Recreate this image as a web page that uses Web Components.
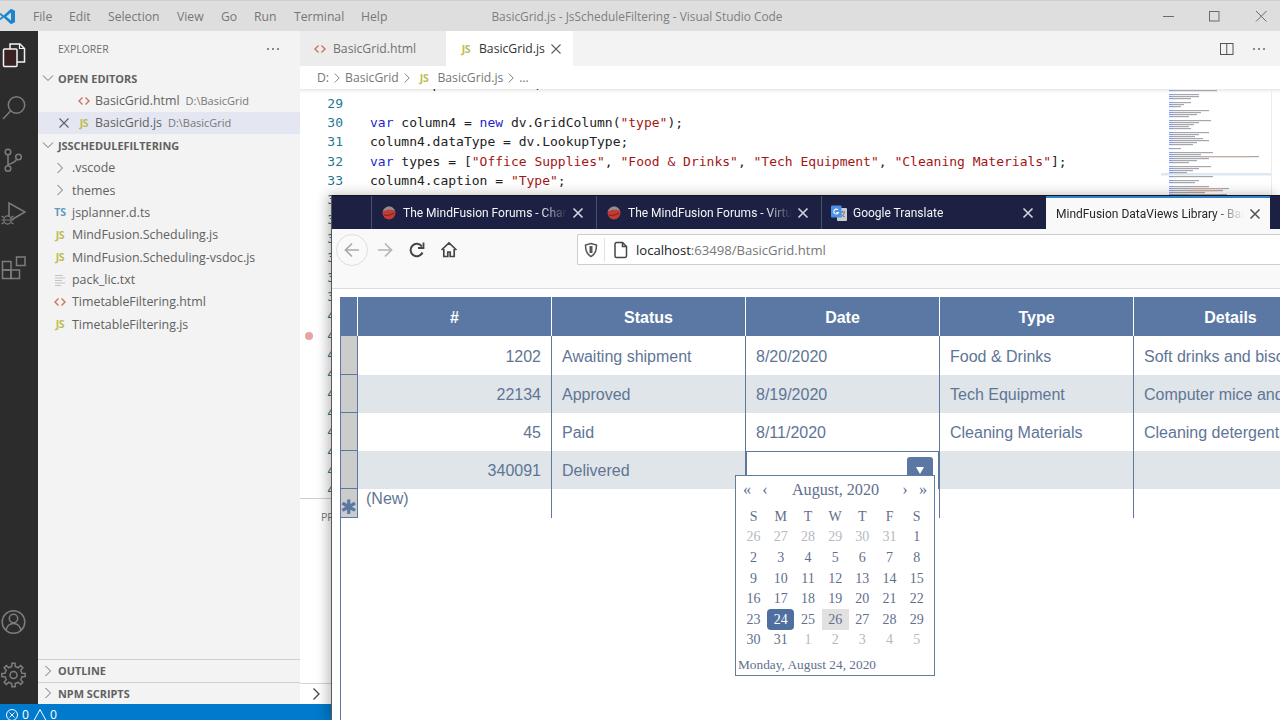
<!DOCTYPE html>
<html>
<head>
<meta charset="utf-8">
<title>BasicGrid.js - JsScheduleFiltering - Visual Studio Code</title>
<style>
  html, body { margin: 0; height: 720px; overflow: hidden; background: #fff; }
  body { position: relative; font-family: 'Open Sans', sans-serif; }
</style>
</head>
<body>
<code-window>
  <title-bar slot="top"></title-bar>
  <activity-bar slot="activity"></activity-bar>
  <explorer-panel slot="side"></explorer-panel>
  <editor-area slot="main"></editor-area>
  <status-bar slot="bottom"></status-bar>
</code-window>
<browser-window>
  <data-grid></data-grid>
</browser-window>

<script>
const uiFont = "'Open Sans', sans-serif";

const icons = {
  html: `<svg width="16" height="16" viewBox="0 0 16 16" fill="none" stroke="#c9745f" stroke-width="1.4"><path d="M6.5 4.5 3 8l3.5 3.5M9.5 4.5 13 8l-3.5 3.5"/></svg>`,
  js: `<span style="font:700 10.5px 'Open Sans',sans-serif;color:#bdbd50;letter-spacing:-.3px">JS</span>`,
  ts: `<span style="font:700 10.5px 'Open Sans',sans-serif;color:#5f9cba;letter-spacing:-.3px">TS</span>`,
  txt: `<svg width="16" height="16" viewBox="0 0 16 16" stroke="#c4c4c4" stroke-width="1"><path d="M3 3.5h8M3 6h10M3 8.5h7M3 11h10M3 13.5h6"/></svg>`,
  chevR: `<svg width="16" height="16" viewBox="0 0 16 16" fill="none" stroke="#6f6f6f" stroke-width="1"><path d="m5.5 3 5 5-5 5"/></svg>`,
  chevD: `<svg width="16" height="16" viewBox="0 0 16 16" fill="none" stroke="#6f6f6f" stroke-width="1"><path d="m3 5.5 5 5 5-5"/></svg>`,
  close: `<svg width="16" height="16" viewBox="0 0 16 16" fill="none" stroke="#5f5f5f" stroke-width="1.1"><path d="m3.5 3.5 9 9m0-9-9 9"/></svg>`,
  more: `<svg width="16" height="16" viewBox="0 0 16 16" fill="#666"><circle cx="3" cy="8" r="1"/><circle cx="8" cy="8" r="1"/><circle cx="13" cy="8" r="1"/></svg>`
};

function gearPath(cx, cy, outer, inner, teeth) {
  let d = '';
  const step = Math.PI * 2 / teeth;
  for (let i = 0; i < teeth; i++) {
    const a = i * step - Math.PI / 2;
    const pts = [[inner, a - step * .5], [inner, a - step * .27], [outer, a - step * .17], [outer, a + step * .17], [inner, a + step * .27]];
    pts.forEach(([r, t], k) => {
      d += (i === 0 && k === 0 ? 'M' : 'L') + (cx + r * Math.cos(t)).toFixed(2) + ' ' + (cy + r * Math.sin(t)).toFixed(2);
    });
  }
  return d + 'Z';
}

class CodeWindow extends HTMLElement {
  constructor() {
    super();
    this.attachShadow({ mode: 'open' });
  }
  connectedCallback() {
    this.shadowRoot.innerHTML = `
      <style>
        :host { display: flex; flex-direction: column; width: 1280px; height: 726px; }
        .body { flex: 1; display: flex; min-height: 0; }
      </style>
      <slot name="top"></slot>
      <div class="body">
        <slot name="activity"></slot>
        <slot name="side"></slot>
        <slot name="main"></slot>
      </div>
      <slot name="bottom"></slot>
    `;
  }
}

class TitleBar extends HTMLElement {
  constructor() {
    super();
    this.attachShadow({ mode: 'open' });
  }
  connectedCallback() {
    const menus = [['File', 36], ['Edit', 39], ['Selection', 69], ['View', 44], ['Go', 33], ['Run', 40], ['Terminal', 67], ['Help', 122]];
    this.shadowRoot.innerHTML = `
      <style>
        :host { display: flex; align-items: center; height: 31px; box-sizing: border-box; background: #dedede; border-top: 1px solid #cfcfcf; font: 12.2px ${uiFont}; color: #777; }
        .logo { width: 33px; height: 30px; display: flex; align-items: center; flex: none; }
        nav { display: flex; flex: none; }
        nav span { flex: none; }
        .title { width: 308px; flex: none; text-align: center; color: #7f7f7f; font-size: 11.9px; white-space: nowrap; }
        .ctl { margin-left: auto; margin-right: -11px; display: flex; flex: none; }
        .ctl svg { display: block; width: 47px; height: 16px; }
      </style>
      <div class="logo">
        <svg width="17" height="17" viewBox="0 0 17 17" style="margin-left:-1px"><path d="M12 .8 16 2.7v11.6L12 16.2 4.6 9.6 1.7 11.9 0 11 3 8.5 0 6l1.7-.9 2.9 2.3z" fill="#1a86cf"/><path d="M12 4.6 7.2 8.5 12 12.4z" fill="#dedede"/></svg>
      </div>
      <nav>${menus.map(([m, w]) => `<span style="width:${w}px">${m}</span>`).join('')}</nav>
      <div class="title">BasicGrid.js - JsScheduleFiltering - Visual Studio Code</div>
      <div class="ctl">
        <svg viewBox="0 0 47 16" stroke="#6b6b6b" fill="none"><path d="M13 8.5h11"/></svg>
        <svg viewBox="0 0 47 16" stroke="#6b6b6b" fill="none"><rect x="12.5" y="3.5" width="9.5" height="9.5"/></svg>
        <svg viewBox="0 0 47 16" stroke="#6b6b6b" fill="none"><path d="m12 3 10.5 10.5m0-10.5L12 13.5"/></svg>
      </div>
    `;
  }
}

class ActivityBar extends HTMLElement {
  constructor() {
    super();
    this.attachShadow({ mode: 'open' });
  }
  connectedCallback() {
    this.shadowRoot.innerHTML = `
      <style>
        :host { display: flex; flex-direction: column; width: 38px; flex: none; background: #2c2c2c; }
        svg { display: block; fill: none; stroke: #7d7d7d; stroke-width: 1.5; }
        .bottom { margin-top: auto; }
      </style>
      <svg width="38" height="270" viewBox="0 0 38 270">
        <g stroke="#f2f2f2">
          <path d="M10 21V13h10l4.5 4.5V31H17"/>
          <path d="M19.5 13v4.5h5" stroke-width="1.2"/>
          <rect x="3.5" y="18" width="13.5" height="17.5" rx="1" fill="#3a2222"/>
        </g>
        <circle cx="16.5" cy="74" r="8.2"/><path d="M10.5 80 3 88"/>
        <circle cx="8" cy="121" r="2.8"/><circle cx="8" cy="137.5" r="2.8"/><circle cx="18.5" cy="126" r="2.8"/>
        <path d="M8 124v10.500M16.500 128.500C15 132 11 132 8 134"/>
        <path d="M9 186V172l16 9-13 7.500"/>
        <g stroke-width="1.2"><ellipse cx="7.5" cy="189" rx="3.6" ry="4.2" fill="#2c2c2c"/><path d="M1.500 185l2.500 1.500M1.500 189h2.500M1.500 193l2.500-1.500M13.500 185l-2.500 1.500M13.500 189h-2.500M13.500 193l-2.500-1.500M4.500 189h6"/></g>
        <rect x="16.5" y="226" width="8.5" height="8.5"/>
        <rect x="2.5" y="230.5" width="8.5" height="8.5"/><rect x="2.5" y="239" width="8.5" height="8.5"/><rect x="11" y="239" width="8.5" height="8.5"/>
      </svg>
      <svg class="bottom" width="38" height="104" viewBox="0 0 38 104">
        <circle cx="13.5" cy="22" r="11.3"/><circle cx="13.5" cy="18.5" r="4.2"/><path d="M6 30.500c1-5 4-7 7.500-7s6.500 2 7.500 7"/>
        <path d="${gearPath(13.5, 75, 11.8, 8.6, 8)}"/><circle cx="13.5" cy="75" r="3.5"/>
      </svg>
    `;
  }
}

class FileRow extends HTMLElement {
  constructor() {
    super();
    this.attachShadow({ mode: 'open' });
  }
  connectedCallback() {
    const icon = icons[this.getAttribute('icon')] || '';
    const lead = this.getAttribute('lead');
    const desc = this.getAttribute('desc');
    this.shadowRoot.innerHTML = `
      <style>
        :host { display: flex; align-items: center; height: 22.38px; color: #616161; white-space: nowrap; padding-left: 14px; }
        :host([open-item]) { padding-left: 18px; }
        :host([selected]) { background: #e4e6f1; }
        .lead { width: 16px; height: 16px; margin-right: 4px; flex: none; }
        .icon { width: 16px; height: 16px; display: flex; align-items: center; justify-content: center; flex: none; margin-right: 4px; }
        :host([open-item]) .icon { margin-right: 3px; }
        .desc { font-size: 11px; color: #777; margin-left: 6px; }
      </style>
      ${this.hasAttribute('open-item') ? `<span class="lead">${lead ? icons[lead] : ''}</span>` : ''}
      <span class="icon">${icon}</span>
      <slot></slot>
      ${desc ? `<span class="desc">${desc}</span>` : ''}
    `;
  }
}

class SectionHead extends HTMLElement {
  constructor() {
    super();
    this.attachShadow({ mode: 'open' });
  }
  connectedCallback() {
    const open = this.hasAttribute('open');
    this.shadowRoot.innerHTML = `
      <style>
        :host { display: flex; align-items: center; height: 22.38px; box-sizing: border-box; font-size: 10.9px; font-weight: 700; color: #616161; padding-left: 2px; }
        :host([ruled]) { border-top: 1px solid #cfcfcf; }
        span { display: flex; width: 18px; flex: none; }
      </style>
      <span>${open ? icons.chevD : icons.chevR}</span><slot></slot>
    `;
  }
}

class ExplorerPanel extends HTMLElement {
  constructor() {
    super();
    this.attachShadow({ mode: 'open' });
  }
  connectedCallback() {
    this.shadowRoot.innerHTML = `
      <style>
        :host { display: flex; flex-direction: column; width: 262px; flex: none; background: #f3f3f3; font: 12.4px ${uiFont}; }
        .title { display: flex; align-items: center; justify-content: space-between; height: 36px; padding: 0 19px 0 20px; font-size: 10.5px; color: #6f6f6f; flex: none; }
        .title span { display: flex; }
        .tail { margin-top: auto; }
      </style>
      <div class="title">EXPLORER<span>${icons.more}</span></div>
      <section-head open>OPEN EDITORS</section-head>
      <file-row open-item icon="html" desc="D:\\BasicGrid">BasicGrid.html</file-row>
      <file-row open-item selected icon="js" lead="close" desc="D:\\BasicGrid">BasicGrid.js</file-row>
      <section-head open>JSSCHEDULEFILTERING</section-head>
      <file-row icon="chevR">.vscode</file-row>
      <file-row icon="chevR">themes</file-row>
      <file-row icon="ts">jsplanner.d.ts</file-row>
      <file-row icon="js">MindFusion.Scheduling.js</file-row>
      <file-row icon="js">MindFusion.Scheduling-vsdoc.js</file-row>
      <file-row icon="txt">pack_lic.txt</file-row>
      <file-row icon="html">TimetableFiltering.html</file-row>
      <file-row icon="js">TimetableFiltering.js</file-row>
      <div class="tail">
        <section-head ruled>OUTLINE</section-head>
        <section-head ruled>NPM SCRIPTS</section-head>
      </div>
    `;
  }
}

class EditorTab extends HTMLElement {
  constructor() {
    super();
    this.attachShadow({ mode: 'open' });
  }
  connectedCallback() {
    const active = this.hasAttribute('active');
    this.shadowRoot.innerHTML = `
      <style>
        :host { display: flex; align-items: center; height: 35px; box-sizing: border-box; background: #ececec; color: #717171; padding-left: 12px; white-space: nowrap; flex: none; }
        :host([active]) { background: #fff; color: #333; }
        .i { width: 16px; display: flex; justify-content: center; margin-right: 5px; }
        .x { display: flex; margin-left: 3px; }
      </style>
      <span class="i">${icons[this.getAttribute('icon')]}</span><slot></slot>
      ${active ? `<span class="x">${icons.close}</span>` : ''}
    `;
  }
}

class MiniMap extends HTMLElement {
  constructor() {
    super();
    this.attachShadow({ mode: 'open' });
  }
  connectedCallback() {
    const rows = [48,0,30,30,22,0,22,15,12,0,40,32,28,20,0,42,30,25,20,22,0,40,30,26,34,40,28,24,0,12,0,44,32,90,40,28,20,0,42,30,24,18,0,44,0,30,26,0,40,60,54,36,58];
    let bars = '';
    rows.forEach((w, i) => {
      if (!w) return;
      const y = 1 + i * 2;
      const blue = Math.min(4, w);
      bars += `<rect x="8" y="${y}" width="${blue}" height="1.2" fill="#8a9ce0"/>`;
      bars += `<rect x="${8 + blue}" y="${y}" width="${w - blue}" height="1.2" fill="#a4a7ae"/>`;
      if (w > 50) bars += `<rect x="${8 + w * .35}" y="${y}" width="${w * .55}" height="1.2" fill="#c9a9a2"/>`;
    });
    this.shadowRoot.innerHTML = `
      <style>
        :host { display: block; width: 110px; flex: none; overflow: hidden; border-right: 1px solid #ececec; }
        svg { display: block; }
      </style>
      <svg width="110" height="110" viewBox="0 0 110 110">
        <rect x="0" y="84" width="110" height="2.5" fill="#dce8f2"/>
        ${bars}
      </svg>
    `;
  }
}

class EditorArea extends HTMLElement {
  constructor() {
    super();
    this.attachShadow({ mode: 'open' });
  }
  connectedCallback() {
    const kw = s => `<span class="k">${s}</span>`;
    const str = s => `<span class="s">${s}</span>`;
    const code = {
      28: `columns.push(column3);`,
      30: `${kw('var')} column4 = ${kw('new')} dv.GridColumn(${str('"type"')});`,
      31: `column4.dataType = dv.LookupType;`,
      32: `${kw('var')} types = [${str('"Office Supplies"')}, ${str('"Food &amp; Drinks"')}, ${str('"Tech Equipment"')}, ${str('"Cleaning Materials"')}];`,
      33: `column4.caption = ${str('"Type"')};`
    };
    let lines = '';
    for (let n = 28; n <= 49; n++) {
      lines += `<div class="line"><span class="no">${n}</span><span class="src">${code[n] || ''}</span>${n === 41 ? '<i class="bp"></i>' : ''}</div>`;
    }
    this.shadowRoot.innerHTML = `
      <style>
        :host { display: flex; flex-direction: column; flex: 1; min-width: 0; background: #fff; font: 12.2px ${uiFont}; }
        .tabs { display: flex; height: 35px; background: #f3f3f3; flex: none; }
        editor-tab:first-child { width: 146px; }
        editor-tab[active] { width: 127px; }
        .actions { margin-left: auto; display: flex; align-items: center; gap: 17px; padding-right: 13px; }
        .actions svg { display: block; }
        .crumbs { display: flex; align-items: center; height: 23px; padding-left: 17px; color: #777; flex: none; white-space: nowrap; }
        .crumbs svg { margin: 0 1px; width: 14px; height: 14px; }
        .crumbs .js { margin: 0 9px 0 5px; display: flex; }
        .code { flex: none; height: 409px; display: flex; position: relative; overflow: hidden; box-shadow: inset 0 5px 4px -4px #ddd; }
        .lines { flex: 1; margin-top: -14.6px; font: 13px/19.33px 'DejaVu Sans Mono', monospace; color: #222; min-width: 0; }
        .line { display: flex; height: 19.33px; white-space: pre; position: relative; }
        .no { width: 43px; text-align: right; color: #237893; margin-right: 27px; flex: none; }
        .k { color: #1f1fc8; }
        .s { color: #a31515; }
        .bp { position: absolute; left: 5px; top: 6px; width: 8px; height: 8px; border-radius: 50%; background: #e9a3a3; }
        mini-map { margin-right: 8px; }
        .panel { flex: 1; border-top: 1px solid #cfcfcf; padding: 11px 0 0 21px; font-size: 10.6px; color: #777; box-sizing: border-box; white-space: nowrap; overflow: hidden; }
        .foot { height: 20px; flex: none; border-top: 1px solid #d4d4d4; display: flex; align-items: center; padding-left: 8px; }
      </style>
      <div class="tabs">
        <editor-tab icon="html">BasicGrid.html</editor-tab>
        <editor-tab icon="js" active>BasicGrid.js</editor-tab>
        <div class="actions">
          <svg width="14" height="14" viewBox="0 0 14 14" fill="none" stroke="#555"><rect x=".5" y="1.5" width="12.5" height="11"/><path d="M6.75 1.5v11"/></svg>
          ${icons.more}
        </div>
      </div>
      <div class="crumbs">D: ${icons.chevR}BasicGrid ${icons.chevR}<span class="js">${icons.js}</span>BasicGrid.js ${icons.chevR}…</div>
      <div class="code">
        <div class="lines">${lines}</div>
        <mini-map></mini-map>
      </div>
      <div class="panel">PROBLEMS</div>
      <div class="foot"><svg width="16" height="16" viewBox="0 0 16 16" fill="none" stroke="#444" stroke-width="1.3"><path d="m5.5 2.5 5.5 5.5-5.5 5.5"/></svg></div>
    `;
  }
}

class StatusBar extends HTMLElement {
  constructor() {
    super();
    this.attachShadow({ mode: 'open' });
  }
  connectedCallback() {
    this.shadowRoot.innerHTML = `
      <style>
        :host { display: flex; align-items: flex-start; gap: 3px; height: 22px; box-sizing: border-box; padding: 3px 0 0 5px; background: #007acc; color: #fff; font: 12.2px/16px ${uiFont}; flex: none; }
        svg { display: block; margin-top: 1px; }
      </style>
      <svg width="14" height="14" viewBox="0 0 14 14" fill="none" stroke="#fff"><circle cx="7" cy="7" r="5.5"/><path d="m4.5 4.5 5 5m0-5-5 5"/></svg><span>0</span>
      <svg width="14" height="14" viewBox="0 0 14 14" fill="none" stroke="#fff" style="margin-left:1px"><path d="M7 1.5 13 12.5H1z"/></svg><span>0</span>
    `;
  }
}

class BrowserTab extends HTMLElement {
  constructor() {
    super();
    this.attachShadow({ mode: 'open' });
  }
  connectedCallback() {
    const fav = this.getAttribute('fav');
    const favicon = fav === 'forum'
      ? `<svg width="16" height="16" viewBox="0 0 16 16"><circle cx="8" cy="8" r="6.5" fill="#c23a34"/><path d="M1.7 6.5C3 3 6 1.5 8 1.5c3 0 5 2 6 4.5-3-1.5-8-2-12.3.5z" fill="#8d8f95"/><path d="M3 10c3 1 7 0 10-2" stroke="#7c1f1b" fill="none"/></svg>`
      : fav === 'translate'
        ? `<svg width="18" height="18" viewBox="0 0 18 18"><rect x="7" y="4" width="10" height="13" rx="1" fill="#c9ccd2"/><path d="M10 8h5M12.5 7v1M11 13c2-1 3-3 3.5-5M11 9.5c1 2 2.5 3 4 3.5" stroke="#767a80" fill="none"/><rect x="1" y="1.5" width="10.5" height="12" rx="1" fill="#4d90e8"/><path d="M8 6a2.4 2.4 0 1 0 .4 2.5H6.300" stroke="#fff" fill="none" stroke-width="1.1"/></svg>`
        : '';
    this.shadowRoot.innerHTML = `
      <style>
        :host { display: flex; align-items: center; width: 225px; height: 33px; box-sizing: border-box; flex: none; color: #f5f5f7; border-left: 1px solid #4a4e6a; font: 12px Roboto, sans-serif; padding: 1px 11px 0 8px; position: relative; }
        :host([active]) { background: #f9f9fa; color: #26262b; border-left: 0; border-top: 2px solid #2f80d0; width: 224px; padding: 0 8px 0 10px; }
        .fav { width: 18px; height: 18px; display: flex; align-items: center; justify-content: center; margin-right: 5px; flex: none; }
        .t { flex: 1; overflow: hidden; white-space: nowrap; -webkit-mask-image: linear-gradient(90deg, #000 84%, transparent 100%); mask-image: linear-gradient(90deg, #000 84%, transparent 100%); }
        .x { margin-left: 4px; display: flex; flex: none; }
        .x svg { display: block; }
      </style>
      ${favicon ? `<span class="fav">${favicon}</span>` : ''}
      <span class="t"><slot></slot></span>
      <span class="x"><svg width="14" height="14" viewBox="0 0 14 14" fill="none" stroke="${this.hasAttribute('active') ? '#555' : '#d4d5dd'}" stroke-width="1.6"><path d="m2.5 2.5 9 9m0-9-9 9"/></svg></span>
    `;
  }
}

class BrowserWindow extends HTMLElement {
  constructor() {
    super();
    this.attachShadow({ mode: 'open' });
  }
  connectedCallback() {
    this.shadowRoot.innerHTML = `
      <style>
        :host { position: absolute; left: 331px; top: 195px; width: 949px; height: 525px; box-sizing: border-box; border-left: 1px solid #59595c; background: #fff; box-shadow: -3px 0 12px rgba(0,0,0,.28); display: flex; flex-direction: column; overflow: hidden; font-family: ${uiFont}; }
        .strip { display: flex; height: 34px; box-sizing: border-box; border-top: 1px solid #151515; background: #1c2143; padding-left: 39px; flex: none; }
        .tool { display: flex; align-items: flex-start; height: 60px; background: #f9f9fa; border-bottom: 1px solid #dcdcdc; flex: none; box-sizing: border-box; padding-top: 4px; }
        .nav { display: flex; width: 245px; flex: none; align-items: center; height: 33px; }
        .back { width: 32px; height: 32px; margin-left: 4px; border: 1px solid #dedede; border-radius: 50%; box-sizing: border-box; display: flex; align-items: center; justify-content: center; flex: none; }
        .nav svg { display: block; flex: none; }
        .url { flex: 1; height: 31px; box-sizing: border-box; background: #fff; border: 1px solid #cdcdcd; border-right: 0; border-radius: 2px 0 0 2px; display: flex; align-items: center; padding-left: 6px; font-size: 13.1px; color: #222; white-space: nowrap; margin-top: 1px; }
        .url .dim { color: #777; }
        .sep { width: 1px; height: 24px; background: #e2e2e2; margin: 0 9px 0 6px; }
        .page { flex: 1; min-height: 0; padding: 8px 0 0 8px; background: #fff; overflow: hidden; }
      </style>
      <div class="strip">
        <browser-tab fav="forum">The MindFusion Forums - Chart Controls</browser-tab>
        <browser-tab fav="forum">The MindFusion Forums - Virtual Planner</browser-tab>
        <browser-tab fav="translate">Google Translate</browser-tab>
        <browser-tab active>MindFusion DataViews Library - BasicGrid</browser-tab>
      </div>
      <div class="tool">
        <div class="nav">
          <div class="back"><svg width="18" height="18" viewBox="0 0 18 18" fill="none" stroke="#a9a9ab" stroke-width="1.7"><path d="M16 9H2.5M9 2.5 2.5 9 9 15.5"/></svg></div>
          <svg style="margin-left:8px" width="18" height="18" viewBox="0 0 18 18" fill="none" stroke="#b4b4b6" stroke-width="1.7"><path d="M2 9h13.5M9 2.5 15.5 9 9 15.5"/></svg>
          <svg style="margin-left:14px" width="18" height="18" viewBox="0 0 18 18" fill="none" stroke="#45454a" stroke-width="2"><path d="M14.5 11.5a6.2 6.2 0 1 1-.6-6"/><path d="M15.5 1.5V7H10" stroke-width="1.8"/></svg>
          <svg style="margin-left:14px" width="18" height="18" viewBox="0 0 18 18" fill="none" stroke="#45454a" stroke-width="1.7"><path d="M1.5 9 9 2l7.5 7M3.8 8v7.5h4V11h2.400v4.500h4V8"/></svg>
        </div>
        <div class="url">
          <svg width="14" height="16" viewBox="0 0 14 16" fill="none" stroke="#55555a" stroke-width="1.5"><path d="M7 1.5 12.5 3c0 6-1.5 9.500-5.500 11.500C3 12.500 1.500 9 1.500 3z"/><path d="M7 4v7" stroke-width="3"/></svg>
          <span class="sep"></span>
          <svg style="margin-right:8px" width="14" height="18" viewBox="0 0 14 18" fill="none" stroke="#45454a" stroke-width="1.5"><path d="M2.500 1.500H8.500L12.500 5.500V15a1.500 1.500 0 0 1-1.500 1.500H2.500A1.500 1.500 0 0 1 1 15V3a1.500 1.500 0 0 1 1.500-1.500z"/><path d="M8.500 1.500v4h4"/></svg>
          <span>localhost<span class="dim">:63498/BasicGrid.html</span></span>
        </div>
      </div>
      <div class="page"><slot></slot></div>
    `;
  }
}

class DatePicker extends HTMLElement {
  constructor() {
    super();
    this.attachShadow({ mode: 'open' });
  }
  connectedCallback() {
    const heads = ['S', 'M', 'T', 'W', 'T', 'F', 'S'];
    const days = [26,27,28,29,30,31,1, 2,3,4,5,6,7,8, 9,10,11,12,13,14,15, 16,17,18,19,20,21,22, 23,24,25,26,27,28,29, 30,31,1,2,3,4,5];
    const cells = days.map((d, i) => {
      const other = i < 6 || i > 36;
      const cls = other ? 'off' : i === 29 ? 'sel' : i === 31 ? 'hot' : '';
      return `<span class="${cls}">${d}</span>`;
    }).join('');
    this.shadowRoot.innerHTML = `
      <style>
        :host { position: absolute; left: 394px; top: 178px; width: 200px; height: 201px; box-sizing: border-box; border: 1px solid #5f7f99; background: #fff; font-family: 'Liberation Serif', serif; color: #5f6f8c; padding: 0 4px; display: flex; flex-direction: column; }
        .head { display: flex; align-items: center; height: 28px; font-size: 16.2px; flex: none; color: #5a7199; }
        .head b { font-weight: 400; flex: 1; text-align: center; color: #5f6f8c; margin-left: 1px; }
        .head span { width: 14px; text-align: center; }
        .head span:first-child { margin-right: 4px; }
        .head span:last-child { margin-left: 4px; }
        .cal { display: grid; grid-template-columns: repeat(7, 27.2px); grid-auto-rows: 20.6px; font-size: 14px; margin-top: 2.5px; flex: none; }
        .cal span { display: flex; align-items: center; justify-content: center; }
        .cal .off { color: #b5b9c0; }
        .cal .sel { background: #4f709f; color: #fff; border-radius: 4px; }
        .cal .hot { background: #e1e1e1; }
        .foot { margin: auto 0 0 -2px; height: 19px; font-size: 13.33px; line-height: 18px; white-space: nowrap; }
      </style>
      <div class="head"><span>«</span><span>‹</span><b>August, 2020</b><span>›</span><span>»</span></div>
      <div class="cal">${heads.map(h => `<span>${h}</span>`).join('')}${cells}</div>
      <div class="foot">Monday, August 24, 2020</div>
    `;
  }
}

class DataGrid extends HTMLElement {
  constructor() {
    super();
    this.attachShadow({ mode: 'open' });
  }
  connectedCallback() {
    const cols = ['#', 'Status', 'Date', 'Type', 'Details'];
    const rows = [
      ['1202', 'Awaiting shipment', '8/20/2020', 'Food &amp; Drinks', 'Soft drinks and biscuits'],
      ['22134', 'Approved', '8/19/2020', 'Tech Equipment', 'Computer mice and keyboards'],
      ['45', 'Paid', '8/11/2020', 'Cleaning Materials', 'Cleaning detergents and soaps'],
      ['340091', 'Delivered', '', '', '']
    ];
    const heights = [39, 38, 38, 38];
    const body = rows.map((r, i) => `
      <div class="rh" style="height:${heights[i]}px"></div>
      ${r.map((c, j) => {
        if (j === 2 && i === 3) return `<div class="c edit"><span class="drop"><i></i></span></div>`;
        return `<div class="c ${i % 2 ? 'alt' : ''} ${i === 0 ? 'first' : ''} ${j === 0 ? 'num' : ''}"><span>${c}</span></div>`;
      }).join('')}
    `).join('');
    this.shadowRoot.innerHTML = `
      <style>
        :host { display: block; position: relative; width: 1000px; height: 430px; border-left: 1px solid #5d779f; box-sizing: border-box; font: 16px 'Liberation Sans', sans-serif; color: #5f7596; }
        .grid { display: grid; grid-template-columns: 17px repeat(5, 194px); }
        .h { background: #5a78a3; color: #fff; font-weight: 700; height: 39px; padding-top: 2px; display: flex; align-items: center; justify-content: center; border-right: 1px solid #fff; box-sizing: border-box; }
        .rh { background: #cccccc; border-right: 1px solid #5d779f; border-bottom: 1px solid #5d779f; box-sizing: border-box; }
        .c { display: flex; align-items: center; padding: 1px 10px 0; border-right: 1px solid #5d779f; box-sizing: border-box; white-space: nowrap; overflow: hidden; background: #fff; }
        .c.first { padding-top: 2px; }
        .c.alt { background: #dfe5e8; }
        .c.num { justify-content: flex-end; }
        .c.edit { border: 1px solid #5d779f; border-width: 1px 2px 0 1px; align-items: flex-start; justify-content: flex-end; padding: 5px 5px 0 0; overflow: visible; }
        .drop { width: 26px; height: 32px; background: #5a78a3; border-radius: 3px 3px 0 0; display: flex; align-items: flex-start; justify-content: center; padding-top: 10px; box-sizing: border-box; flex: none; }
        .drop i { width: 0; height: 0; border: 4.5px solid transparent; border-top: 7px solid #fff; border-bottom: 0; }
        .rh.new { height: 29px; display: flex; align-items: flex-end; justify-content: center; color: #5a78a3; font: 700 20px/19px 'DejaVu Sans', sans-serif; overflow: hidden; padding-right: 1px; }
        .n { height: 29px; border-right: 1px solid #5d779f; box-sizing: border-box; padding: 1px 0 0 8px; line-height: 18px; white-space: nowrap; }
      </style>
      <div class="grid">
        <div class="h"></div>
        ${cols.map(c => `<div class="h">${c}</div>`).join('')}
        ${body}
        <div class="rh new">✱</div>
        <div class="n">(New)</div><div class="n"></div><div class="n"></div><div class="n"></div><div class="n"></div>
      </div>
      <date-picker></date-picker>
    `;
  }
}

customElements.define('code-window', CodeWindow);
customElements.define('title-bar', TitleBar);
customElements.define('activity-bar', ActivityBar);
customElements.define('file-row', FileRow);
customElements.define('section-head', SectionHead);
customElements.define('explorer-panel', ExplorerPanel);
customElements.define('editor-tab', EditorTab);
customElements.define('mini-map', MiniMap);
customElements.define('editor-area', EditorArea);
customElements.define('status-bar', StatusBar);
customElements.define('browser-tab', BrowserTab);
customElements.define('browser-window', BrowserWindow);
customElements.define('date-picker', DatePicker);
customElements.define('data-grid', DataGrid);
</script>
</body>
</html>
